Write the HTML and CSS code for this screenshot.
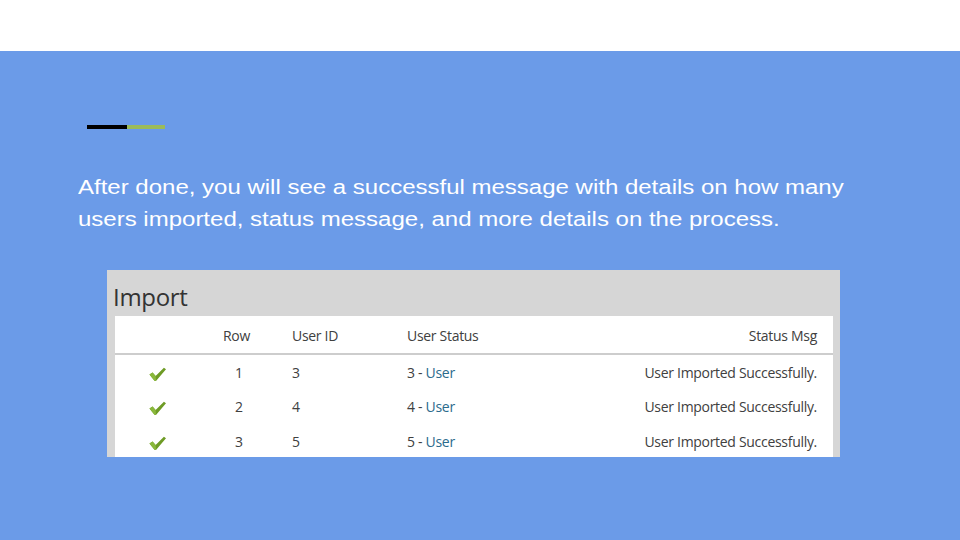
FILE: index.html
```html
<!DOCTYPE html>
<html>
<head>
<meta charset="utf-8">
<link rel="stylesheet" href="styles.css">
</head>
<body>
<div class="top"></div>
<main class="slide">
  <div class="accent"><span class="dark"></span><span class="green"></span></div>
  <p class="lead"><span class="l1">After done, you will see a successful message with details on how many</span><span class="l2">users imported, status message, and more details on the process.</span></p>
  <div class="shot">
    <div class="title">Import</div>
    <table class="grid">
      <thead>
        <tr><th class="c-chk"></th><th class="c-row">Row</th><th class="c-id">User ID</th><th class="c-st">User Status</th><th class="c-msg">Status Msg</th></tr>
      </thead>
      <tbody>
        <tr><td class="c-chk"><svg class="chk" viewBox="0 0 20 18" width="19" height="17"><path d="M1.5 9 L4.8 6.8 L8 10.6 L16.8 1.8 L19 3.4 L8.4 16 L6.8 15.6 Z" fill="#6e9b25"/><path d="M1.5 9 L4.8 6.8 L8 10.6 L8.4 16 L6.8 15.6 Z" fill="#8ab83c"/></svg></td><td class="c-row">1</td><td class="c-id">3</td><td class="c-st">3 - <span class="lnk">User</span></td><td class="c-msg">User Imported Successfully.</td></tr>
        <tr><td class="c-chk"><svg class="chk" viewBox="0 0 20 18" width="19" height="17"><path d="M1.5 9 L4.8 6.8 L8 10.6 L16.8 1.8 L19 3.4 L8.4 16 L6.8 15.6 Z" fill="#6e9b25"/><path d="M1.5 9 L4.8 6.8 L8 10.6 L8.4 16 L6.8 15.6 Z" fill="#8ab83c"/></svg></td><td class="c-row">2</td><td class="c-id">4</td><td class="c-st">4 - <span class="lnk">User</span></td><td class="c-msg">User Imported Successfully.</td></tr>
        <tr><td class="c-chk"><svg class="chk" viewBox="0 0 20 18" width="19" height="17"><path d="M1.5 9 L4.8 6.8 L8 10.6 L16.8 1.8 L19 3.4 L8.4 16 L6.8 15.6 Z" fill="#6e9b25"/><path d="M1.5 9 L4.8 6.8 L8 10.6 L8.4 16 L6.8 15.6 Z" fill="#8ab83c"/></svg></td><td class="c-row">3</td><td class="c-id">5</td><td class="c-st">5 - <span class="lnk">User</span></td><td class="c-msg">User Imported Successfully.</td></tr>
      </tbody>
    </table>
  </div>
</main>
</body>
</html>
```
FILE: styles.css
```css
* { box-sizing: border-box; }
html, body { margin: 0; padding: 0; }
body { width: 960px; height: 540px; overflow: hidden; background: #fff; font-family: "Liberation Sans", Arial, sans-serif; }
.top { height: 51px; background: #fff; }
.slide { height: 489px; background: #6b9be8; padding: 74px 0 0 78px; }
.accent { display: flex; margin-left: 9px; height: 4px; }
.accent .dark { width: 40px; background: #000; }
.accent .green { width: 38px; background: #9bbb59; }
.lead { margin: 42px 0 0 0; width: 637px; color: #fff; font-size: 20px; line-height: 32px; transform: scaleX(1.2); transform-origin: 0 0; }
.lead .l1 { display: block; text-align: justify; text-align-last: justify; white-space: nowrap; }
.lead .l2 { display: block; white-space: nowrap; }
.shot { margin: 35px 0 0 29px; width: 733px; height: 187px; background: #d6d6d6; padding: 0 7px 0 8px; overflow: hidden; font-family: "Open Sans", "Noto Sans", sans-serif; }
.title { height: 46px; padding: 12px 0 0 0; margin-left: -2px; font-size: 24px; line-height: 30px; color: #333; letter-spacing: -0.3px; }
.grid { width: 718px; border-collapse: collapse; background: #fff; color: #404040; font-size: 14px; letter-spacing: -0.3px; }
.grid th { font-weight: 400; height: 38px; padding-top: 2px; text-align: left; border-bottom: 2px solid #cdcdcd; }
.grid td { height: 35px; }
.c-chk { width: 108px; text-align: center; }
.grid td.c-chk { padding: 2px 24px 0 0; }
.c-row { width: 68px; }
.grid th.c-row { padding-left: 0; }
.grid td.c-row { padding-left: 12px; }
.c-id { width: 115px; }
.c-msg { text-align: right !important; padding-right: 16px; }
.lnk { color: #2b6b8c; }
.chk { display: inline-block; vertical-align: middle; }
```
